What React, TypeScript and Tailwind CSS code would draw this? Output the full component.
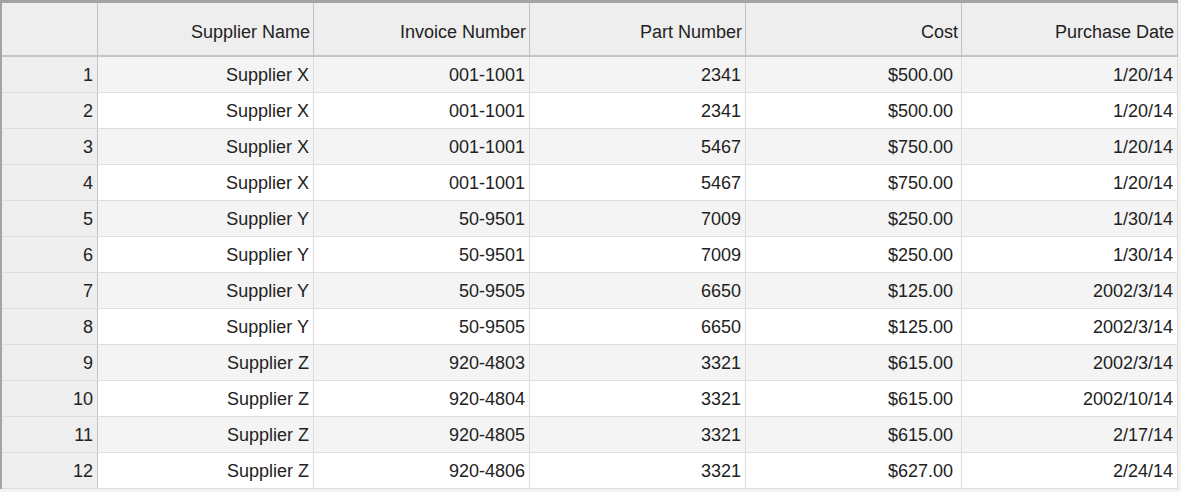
const headers = ['Supplier Name', 'Invoice Number', 'Part Number', 'Cost', 'Purchase Date'];

const rows: string[][] = [
  ['Supplier X', '001-1001', '2341', '$500.00', '1/20/14'],
  ['Supplier X', '001-1001', '2341', '$500.00', '1/20/14'],
  ['Supplier X', '001-1001', '5467', '$750.00', '1/20/14'],
  ['Supplier X', '001-1001', '5467', '$750.00', '1/20/14'],
  ['Supplier Y', '50-9501', '7009', '$250.00', '1/30/14'],
  ['Supplier Y', '50-9501', '7009', '$250.00', '1/30/14'],
  ['Supplier Y', '50-9505', '6650', '$125.00', '2002/3/14'],
  ['Supplier Y', '50-9505', '6650', '$125.00', '2002/3/14'],
  ['Supplier Z', '920-4803', '3321', '$615.00', '2002/3/14'],
  ['Supplier Z', '920-4804', '3321', '$615.00', '2002/10/14'],
  ['Supplier Z', '920-4805', '3321', '$615.00', '2/17/14'],
  ['Supplier Z', '920-4806', '3321', '$627.00', '2/24/14'],
];

export default function App() {
  return (
    <div
      className="w-[1181px] h-[492px] overflow-hidden bg-[#f2f2f2] text-[18px] text-[#222]"
      style={{ fontFamily: '"Liberation Sans", Arial, sans-serif' }}
    >
      <div className="w-[1178px] border-t-[3px] border-l-2 border-[#a3a3a3]">
        <div className="flex h-[54px] bg-[#eeeeee] border-b-2 border-[#c4c4c4]">
          <div className="w-[96px] shrink-0 border-r border-[#c4c4c4]" />
          {headers.map((h) => (
            <div
              key={h}
              className="w-[216px] shrink-0 flex items-center justify-end pt-[6px] pr-[3px] border-r border-[#c4c4c4]"
            >
              {h}
            </div>
          ))}
        </div>
        {rows.map((row, i) => (
          <div
            key={i}
            className={`flex h-[36px] border-b border-[#dddddd] ${i % 2 === 0 ? 'bg-[#f4f4f4]' : 'bg-white'}`}
          >
            <div className="w-[96px] shrink-0 flex items-center justify-end pt-[2px] pr-[4px] bg-[#eeeeee] border-r border-[#c4c4c4]">
              {i + 1}
            </div>
            {row.map((cell, j) => (
              <div
                key={j}
                className={`w-[216px] shrink-0 flex items-center justify-end pt-[2px] border-r border-[#dddddd] ${j === 3 ? 'pr-[8px]' : 'pr-[4px]'}`}
              >
                {cell}
              </div>
            ))}
          </div>
        ))}
      </div>
    </div>
  );
}
